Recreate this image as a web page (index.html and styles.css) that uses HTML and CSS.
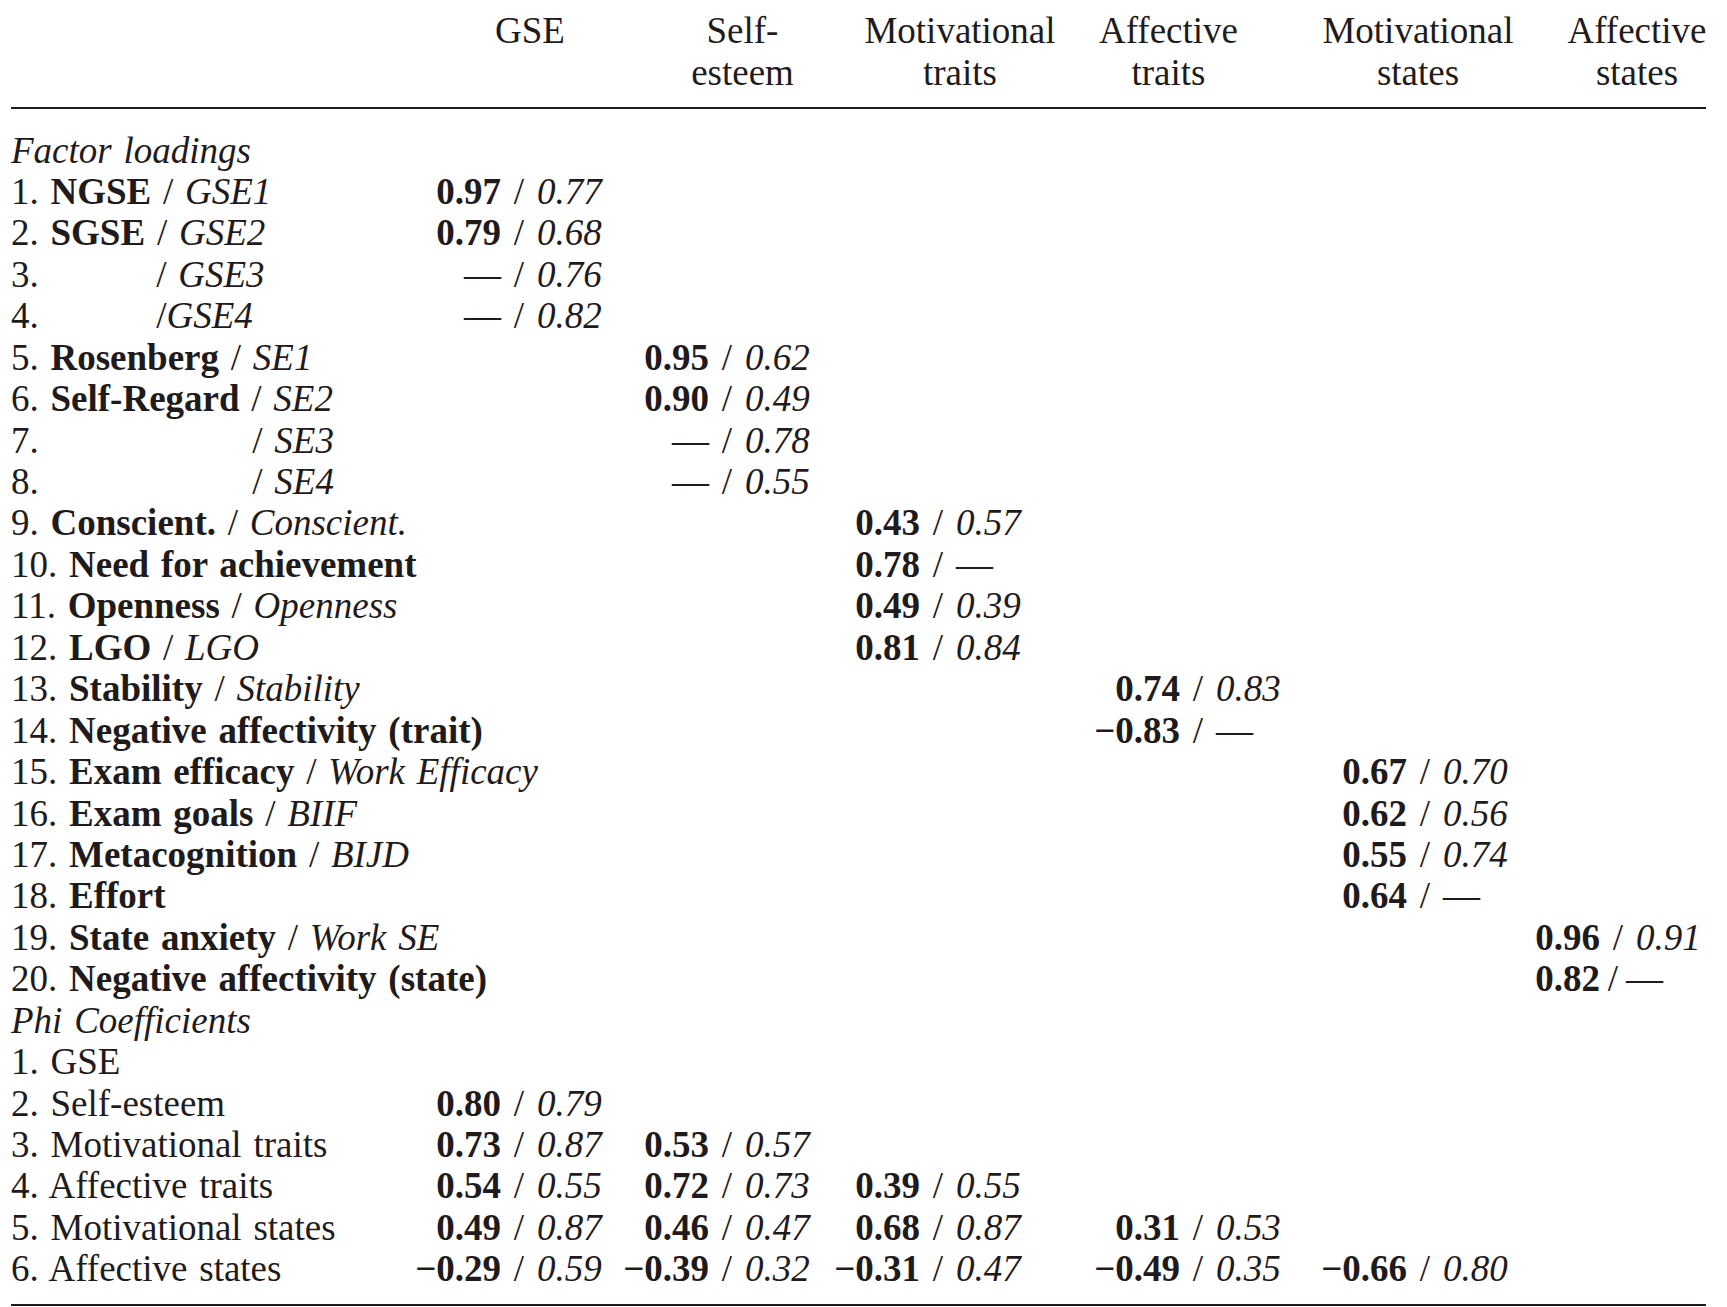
FILE: index.html
```html
<!DOCTYPE html>
<html lang="en">
<head>
<meta charset="utf-8">
<title>Factor loadings and phi coefficients</title>
<link rel="stylesheet" href="styles.css">
</head>
<body>
<div class="table">
  <div class="head">
    <div class="h h1">GSE</div>
    <div class="h h2">Self-<br>esteem</div>
    <div class="h h3">Motivational<br>traits</div>
    <div class="h h4">Affective<br>traits</div>
    <div class="h h5">Motivational<br>states</div>
    <div class="h h6">Affective<br>states</div>
  </div>
  <div class="body">
    <div class="row"><div class="lab"><i>Factor loadings</i></div></div>
    <div class="row"><div class="lab">1. <b>NGSE</b> / <i>GSE1</i></div><div class="v c1"><b class="a">0.97</b><span class="s">/</span><i class="b">0.77</i></div></div>
    <div class="row"><div class="lab">2. <b>SGSE</b> / <i>GSE2</i></div><div class="v c1"><b class="a">0.79</b><span class="s">/</span><i class="b">0.68</i></div></div>
    <div class="row"><div class="lab">3. <span class="pad pad-sgse"></span> / <i>GSE3</i></div><div class="v c1"><span class="a">—</span><span class="s">/</span><i class="b">0.76</i></div></div>
    <div class="row"><div class="lab">4. <span class="pad pad-sgse"></span> /<i>GSE4</i></div><div class="v c1"><span class="a">—</span><span class="s">/</span><i class="b">0.82</i></div></div>
    <div class="row"><div class="lab">5. <b>Rosenberg</b> / <i>SE1</i></div><div class="v c2"><b class="a">0.95</b><span class="s">/</span><i class="b">0.62</i></div></div>
    <div class="row"><div class="lab">6. <b>Self-Regard</b> / <i>SE2</i></div><div class="v c2"><b class="a">0.90</b><span class="s">/</span><i class="b">0.49</i></div></div>
    <div class="row"><div class="lab">7. <span class="pad pad-sr"></span> / <i>SE3</i></div><div class="v c2"><span class="a">—</span><span class="s">/</span><i class="b">0.78</i></div></div>
    <div class="row"><div class="lab">8. <span class="pad pad-sr"></span> / <i>SE4</i></div><div class="v c2"><span class="a">—</span><span class="s">/</span><i class="b">0.55</i></div></div>
    <div class="row"><div class="lab">9. <b>Conscient.</b> / <i>Conscient.</i></div><div class="v c3"><b class="a">0.43</b><span class="s">/</span><i class="b">0.57</i></div></div>
    <div class="row"><div class="lab">10. <b>Need for achievement</b></div><div class="v c3"><b class="a">0.78</b><span class="s">/</span><span class="b">—</span></div></div>
    <div class="row"><div class="lab">11. <b>Openness</b> / <i>Openness</i></div><div class="v c3"><b class="a">0.49</b><span class="s">/</span><i class="b">0.39</i></div></div>
    <div class="row"><div class="lab">12. <b>LGO</b> / <i>LGO</i></div><div class="v c3"><b class="a">0.81</b><span class="s">/</span><i class="b">0.84</i></div></div>
    <div class="row"><div class="lab">13. <b>Stability</b> / <i>Stability</i></div><div class="v c4"><b class="a">0.74</b><span class="s">/</span><i class="b">0.83</i></div></div>
    <div class="row"><div class="lab">14. <b>Negative affectivity (trait)</b></div><div class="v c4"><b class="a">−0.83</b><span class="s">/</span><span class="b">—</span></div></div>
    <div class="row"><div class="lab">15. <b>Exam efficacy</b> / <i>Work Efficacy</i></div><div class="v c5"><b class="a">0.67</b><span class="s">/</span><i class="b">0.70</i></div></div>
    <div class="row"><div class="lab">16. <b>Exam goals</b> / <i>BIIF</i></div><div class="v c5"><b class="a">0.62</b><span class="s">/</span><i class="b">0.56</i></div></div>
    <div class="row"><div class="lab">17. <b>Metacognition</b> / <i>BIJD</i></div><div class="v c5"><b class="a">0.55</b><span class="s">/</span><i class="b">0.74</i></div></div>
    <div class="row"><div class="lab">18. <b>Effort</b></div><div class="v c5"><b class="a">0.64</b><span class="s">/</span><span class="b">—</span></div></div>
    <div class="row"><div class="lab">19. <b>State anxiety</b> / <i>Work SE</i></div><div class="v c6"><b class="a">0.96</b><span class="s">/</span><i class="b">0.91</i></div></div>
    <div class="row"><div class="lab">20. <b>Negative affectivity (state)</b></div><div class="v c6"><b class="a">0.82</b><span class="s tight">/</span><span class="b">—</span></div></div>
    <div class="row"><div class="lab"><i>Phi Coefficients</i></div></div>
    <div class="row"><div class="lab">1. GSE</div></div>
    <div class="row"><div class="lab">2. Self-esteem</div><div class="v c1"><b class="a">0.80</b><span class="s">/</span><i class="b">0.79</i></div></div>
    <div class="row"><div class="lab">3. Motivational traits</div><div class="v c1"><b class="a">0.73</b><span class="s">/</span><i class="b">0.87</i></div><div class="v c2"><b class="a">0.53</b><span class="s">/</span><i class="b">0.57</i></div></div>
    <div class="row"><div class="lab">4. Affective traits</div><div class="v c1"><b class="a">0.54</b><span class="s">/</span><i class="b">0.55</i></div><div class="v c2"><b class="a">0.72</b><span class="s">/</span><i class="b">0.73</i></div><div class="v c3"><b class="a">0.39</b><span class="s">/</span><i class="b">0.55</i></div></div>
    <div class="row"><div class="lab">5. Motivational states</div><div class="v c1"><b class="a">0.49</b><span class="s">/</span><i class="b">0.87</i></div><div class="v c2"><b class="a">0.46</b><span class="s">/</span><i class="b">0.47</i></div><div class="v c3"><b class="a">0.68</b><span class="s">/</span><i class="b">0.87</i></div><div class="v c4"><b class="a">0.31</b><span class="s">/</span><i class="b">0.53</i></div></div>
    <div class="row"><div class="lab">6. Affective states</div><div class="v c1"><b class="a">−0.29</b><span class="s">/</span><i class="b">0.59</i></div><div class="v c2"><b class="a">−0.39</b><span class="s">/</span><i class="b">0.32</i></div><div class="v c3"><b class="a">−0.31</b><span class="s">/</span><i class="b">0.47</i></div><div class="v c4"><b class="a">−0.49</b><span class="s">/</span><i class="b">0.35</i></div><div class="v c5"><b class="a">−0.66</b><span class="s">/</span><i class="b">0.80</i></div></div>
  </div>
</div>
</body>
</html>
```
FILE: styles.css
```css
html, body {
  margin: 0;
  padding: 0;
  background: #ffffff;
}
body {
  font-family: "Liberation Serif", "Times New Roman", serif;
  font-size: 37px;
  color: #1f1b1c;
}
.table {
  margin-left: 11px;
  width: 1695px;
}
.head {
  display: grid;
  grid-template-columns: 430px 178px 247px 188px 229px 270px 153px;
  line-height: 42.5px;
  padding-top: 9.5px;
  padding-bottom: 12.5px;
  border-bottom: 2px solid #1f1b1c;
}
.h {
  display: flex;
  flex-direction: column;
  align-items: center;
  text-align: center;
  white-space: nowrap;
}
.h1 { grid-column: 2; }
.h2 { grid-column: 3; }
.h3 { grid-column: 4; }
.h4 { grid-column: 5; }
.h5 { grid-column: 6; }
.h6 { grid-column: 7; padding-left: 15px; }
.body {
  padding-top: 20.5px;
  padding-bottom: 14px;
  border-bottom: 2px solid #1f1b1c;
}
.row {
  display: grid;
  grid-template-columns: 400px 200px 200px 210px 260px 230px 195px;
  line-height: 41.45px;
  height: 41.45px;
}
.lab {
  grid-column: 1;
  grid-row: 1;
  white-space: nowrap;
  word-spacing: 2.5px;
}
.lab b { font-weight: bold; }
.lab i { font-style: italic; }
.pad {
  display: inline-block;
  height: 1px;
}
.pad-sgse { width: 94px; }
.pad-sr { width: 190px; }
.v {
  grid-row: 1;
  display: flex;
  white-space: nowrap;
}
.v .a {
  width: var(--aw);
  text-align: right;
  flex: none;
}
.v b.a { font-weight: bold; }
.v .s {
  width: 36px;
  flex: none;
  text-align: center;
}
.v .s.tight {
  width: 26px;
}
.v .b {
  flex: none;
  font-style: italic;
}
.v span.b { font-style: normal; }
.c1 { grid-column: 2; --aw: 90px; }
.c2 { grid-column: 3; --aw: 98px; }
.c3 { grid-column: 4; --aw: 109px; }
.c4 { grid-column: 5; --aw: 159px; }
.c5 { grid-column: 6; --aw: 126px; }
.c6 { grid-column: 7; --aw: 89px; }
```
